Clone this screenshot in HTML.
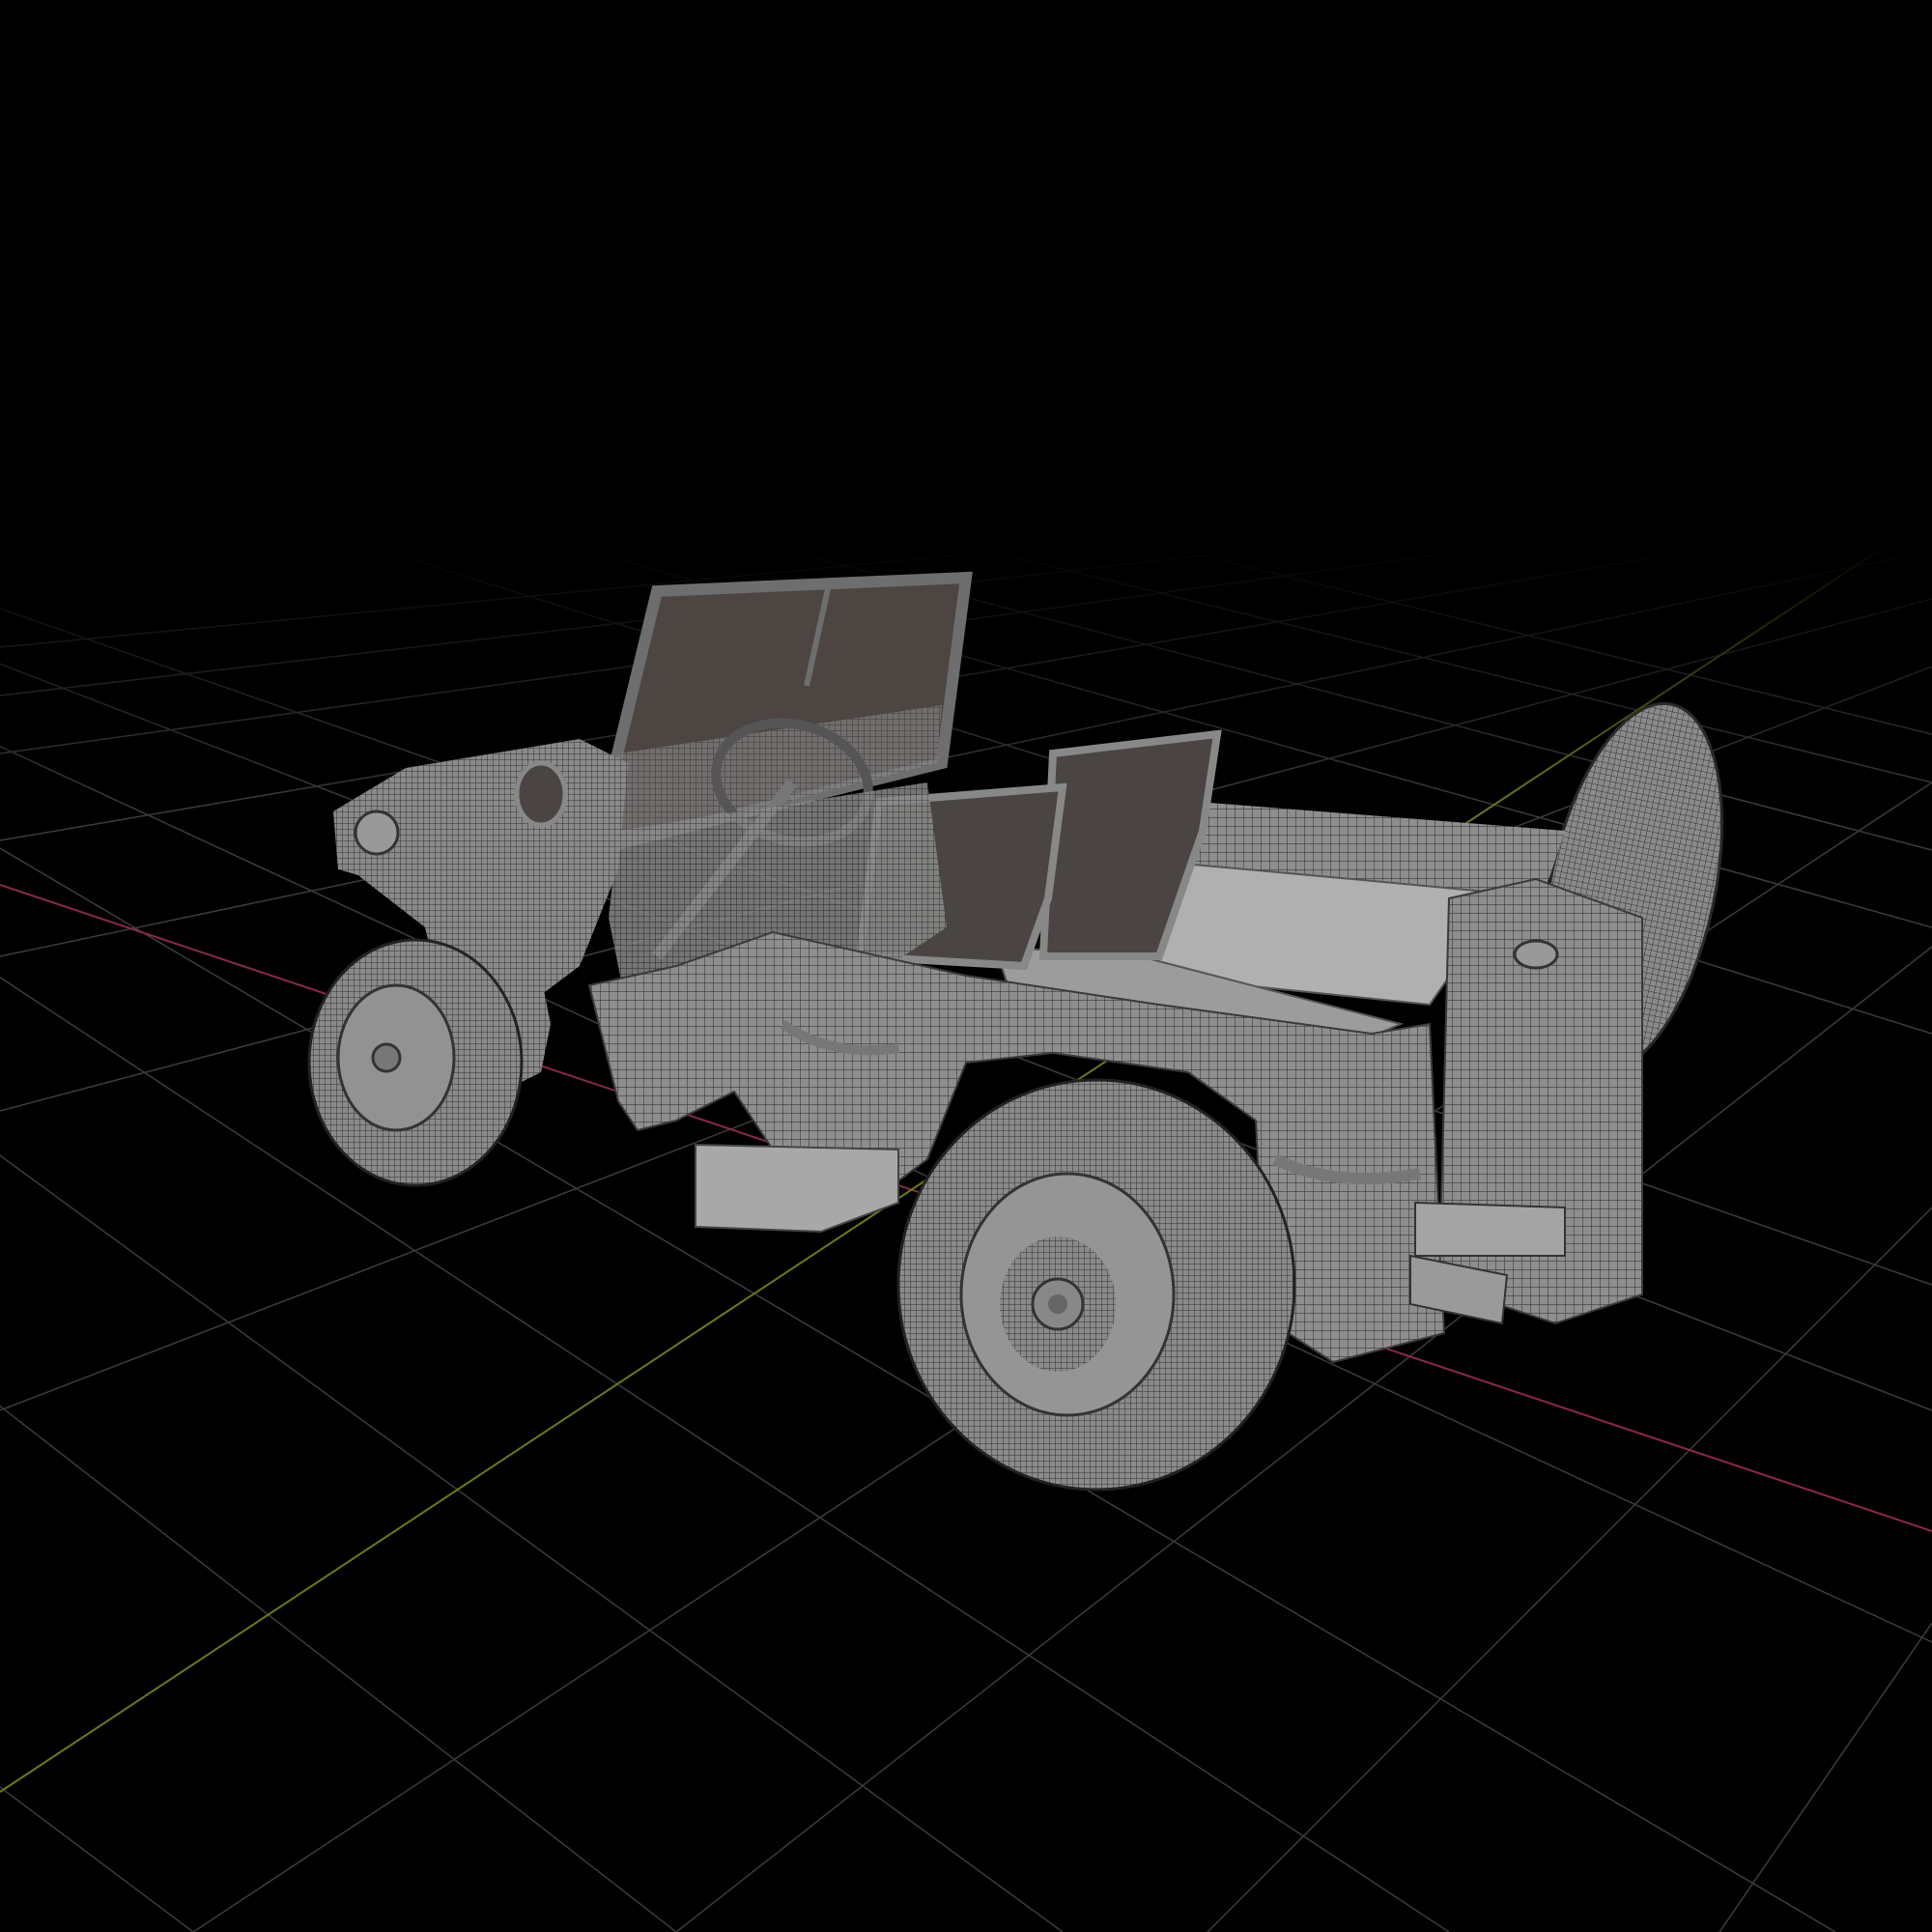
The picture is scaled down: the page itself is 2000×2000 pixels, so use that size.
<!DOCTYPE html>
<html><head><meta charset="utf-8"><style>
html,body{margin:0;padding:0;background:#000;}
svg{display:block}
</style></head><body>
<svg width="2000" height="2000" viewBox="0 0 2000 2000" xmlns="http://www.w3.org/2000/svg">
<defs>
<pattern id="mesh" width="9" height="9" patternUnits="userSpaceOnUse">
<rect width="9" height="9" fill="#8e8e8e"/>
<path d="M0 0H9M0 0V9" stroke="#3a3a3a" stroke-width="1.2"/>
</pattern>
<pattern id="meshf" width="6" height="6" patternUnits="userSpaceOnUse">
<rect width="6" height="6" fill="#8a8a8a"/>
<path d="M0 0H6M0 0V6" stroke="#333" stroke-width="1"/>
</pattern>
<linearGradient id="fade" x1="0" y1="0" x2="0" y2="1">
<stop offset="0" stop-color="#000" stop-opacity="1"/>
<stop offset="0.28" stop-color="#000" stop-opacity="1"/>
<stop offset="0.42" stop-color="#000" stop-opacity="0"/>
</linearGradient>
</defs>
<rect width="2000" height="2000" fill="#000"/>
<g stroke="#3c3c3c" stroke-width="1.5" fill="none">
<line x1="-200" y1="560" x2="2000" y2="1330"/>
<line x1="-200" y1="610" x2="2000" y2="1460"/>
<line x1="-200" y1="680" x2="2000" y2="1700"/>
<line x1="-200" y1="760" x2="1900" y2="2000"/>
<line x1="-200" y1="880" x2="1500" y2="2000"/>
<line x1="-200" y1="1050" x2="1100" y2="2000"/>
<line x1="-200" y1="1300" x2="700" y2="2000"/>
<line x1="-200" y1="1700" x2="200" y2="2000"/>
<line x1="300" y1="540" x2="2000" y2="1070"/>
<line x1="500" y1="540" x2="2000" y2="960"/>
<line x1="700" y1="540" x2="2000" y2="880"/>
<line x1="900" y1="540" x2="2000" y2="810"/>
<line x1="1100" y1="540" x2="2000" y2="760"/>
<line x1="0" y1="870" x2="1900" y2="545"/>
<line x1="0" y1="990" x2="2000" y2="570"/>
<line x1="0" y1="1150" x2="2000" y2="620"/>
<line x1="0" y1="1460" x2="2000" y2="690"/>
<line x1="200" y1="2000" x2="2000" y2="810"/>
<line x1="700" y1="2000" x2="2000" y2="980"/>
<line x1="1250" y1="2000" x2="2000" y2="1250"/>
<line x1="1780" y1="2000" x2="2000" y2="1680"/>
<line x1="0" y1="780" x2="1700" y2="545"/>
<line x1="0" y1="720" x2="1500" y2="545"/>
<line x1="0" y1="670" x2="1300" y2="545"/>
</g>
<line x1="0" y1="916" x2="2000" y2="1585" stroke="#8a2a45" stroke-width="2"/>
<line x1="0" y1="1855" x2="1960" y2="560" stroke="#6a7a1a" stroke-width="2"/>
<rect width="2000" height="2000" fill="url(#fade)"/>

<ellipse cx="1690" cy="920" rx="85" ry="195" fill="url(#meshf)" stroke="#2a2a2a" stroke-width="3" transform="rotate(12 1690 920)"/>
<polygon points="1240,830 1620,860 1600,920 1460,1030 1180,1000 1180,880" fill="url(#mesh)"/>
<polygon points="1180,890 1400,910 1560,925 1480,1040 1190,1010" fill="#b0b0b0" stroke="#555" stroke-width="2"/>
<polygon points="1030,980 1180,990 1450,1060 1380,1090 1050,1040" fill="#9c9c9c" stroke="#555" stroke-width="2"/>
<polygon points="1090,780 1260,760 1245,860 1200,990 1080,990" fill="#4a4442" stroke="#888" stroke-width="8"/>
<polygon points="910,830 1100,815 1085,930 1060,1000 890,990" fill="#4a4442" stroke="#888" stroke-width="8"/>
<polygon points="680,612 1000,598 975,790 615,880" fill="#4c4541" stroke="#6e6e6e" stroke-width="12"/>
<line x1="858" y1="605" x2="835" y2="710" stroke="#6e6e6e" stroke-width="6"/>
<polygon points="640,780 975,730 970,790 615,880" fill="url(#meshf)" opacity="0.6"/>
<ellipse cx="820" cy="810" rx="80" ry="60" fill="none" stroke="#555" stroke-width="10" transform="rotate(15 820 810)"/>
<line x1="820" y1="810" x2="680" y2="990" stroke="#777" stroke-width="12"/>
<polygon points="345,840 420,795 600,765 650,790 640,900 600,1000 560,1030 420,920 350,900" fill="url(#meshf)"/>
<circle cx="390" cy="862" r="22" fill="#999" stroke="#333" stroke-width="3"/>
<ellipse cx="560" cy="822" rx="25" ry="32" fill="#4a4442" stroke="#888" stroke-width="5"/>
<polygon points="640,860 960,810 980,960 800,1080 660,1100 630,950" fill="url(#meshf)" opacity="0.85"/>
<polygon points="350,890 450,900 540,910 570,1060 560,1110 540,1120 470,1080 440,960" fill="url(#meshf)"/>
<ellipse cx="430" cy="1100" rx="110" ry="127" fill="url(#meshf)" stroke="#222" stroke-width="3"/>
<ellipse cx="410" cy="1095" rx="60" ry="75" fill="#929292" stroke="#333" stroke-width="3"/>
<circle cx="400" cy="1095" r="14" fill="#777" stroke="#333" stroke-width="3"/>
<polygon points="610,1020 700,1000 800,965 1000,1010 1200,1040 1420,1070 1480,1060 1495,1380 1380,1410 1310,1365 1300,1160 1230,1110 1090,1090 1000,1100 960,1200 920,1230 860,1210 800,1190 760,1130 700,1160 660,1170 640,1140" fill="url(#mesh)" stroke="#3a3a3a" stroke-width="2"/>
<polygon points="720,1185 930,1190 930,1245 850,1275 720,1270" fill="#a8a8a8" stroke="#444" stroke-width="2"/>
<ellipse cx="1135" cy="1330" rx="205" ry="212" fill="url(#meshf)" stroke="#222" stroke-width="3"/>
<ellipse cx="1105" cy="1340" rx="110" ry="125" fill="#959595" stroke="#333" stroke-width="3"/>
<ellipse cx="1095" cy="1350" rx="60" ry="70" fill="url(#meshf)"/>
<circle cx="1095" cy="1350" r="26" fill="#888" stroke="#333" stroke-width="3"/>
<circle cx="1095" cy="1350" r="10" fill="#666"/>
<polygon points="1500,930 1590,910 1700,950 1700,1340 1610,1370 1490,1330" fill="url(#mesh)" stroke="#3a3a3a" stroke-width="2"/>
<polygon points="1465,1245 1620,1250 1620,1300 1465,1300" fill="#a4a4a4" stroke="#333" stroke-width="2"/>
<polygon points="1460,1300 1560,1320 1555,1370 1460,1350" fill="#9a9a9a" stroke="#333" stroke-width="2"/>
<ellipse cx="1590" cy="988" rx="22" ry="14" fill="#999" stroke="#333" stroke-width="3"/>
<path d="M1320 1200 Q1380 1230 1470 1215" stroke="#777" stroke-width="12" fill="none"/>
<path d="M810 1060 Q860 1095 930 1085" stroke="#777" stroke-width="10" fill="none"/>
</svg>
</body></html>
